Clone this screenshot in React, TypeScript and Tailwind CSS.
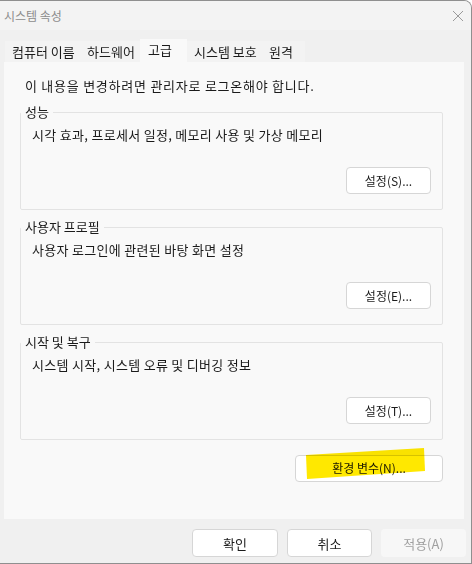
import React from "react";

const font = { fontFamily: '"Noto Sans CJK KR", "Liberation Sans", sans-serif' };

function Btn({ label, className = "" }: { label: string; className?: string }) {
  return (
    <button
      className={`h-[27px] bg-white border border-[#d6d6d6] rounded-[4px] text-[12px] text-[#1b1b1b] leading-none ${className}`}
    >
      {label}
    </button>
  );
}

function Group({ title, desc, button }: { title: string; desc: string; button: string }) {
  return (
    <fieldset className="border border-[#e3e3e3] rounded-[2px] h-[107px] flex flex-col">
      <legend className="px-1 text-[13px] leading-[18px] text-[#1b1b1b]">{title}</legend>
      <div className="pl-[11px] pt-[5px] text-[13px] leading-[18px] tracking-[0.3px] text-[#1b1b1b]">{desc}</div>
      <div className="flex justify-end pr-[11px] mt-[23px]">
        <Btn label={button} className="w-[85px]" />
      </div>
    </fieldset>
  );
}

const tabs = [
  { label: "컴퓨터 이름", w: "w-[75px]" },
  { label: "하드웨어", w: "w-[60px]" },
  { label: "고급", w: "w-[47px]", active: true },
  { label: "시스템 보호", w: "w-[75px]" },
  { label: "원격", w: "w-[43px]" },
];

export default function App() {
  return (
    <div
      style={font}
      className="w-[472px] h-[564px] bg-[#f0f0f0] border-t border-r border-b border-[#8f8f8f] rounded-tr-[8px] flex flex-col overflow-hidden"
    >
      {/* title bar */}
      <div className="h-[29px] bg-[#f3f3f3] flex items-center justify-between pl-[4px] pr-[7px]">
        <span className="text-[12px] text-[#8c8c8c]">시스템 속성</span>
        <svg width="12" height="12" viewBox="0 0 12 12" className="mt-[1px]">
          <path d="M1 1L11 11M11 1L1 11" stroke="#9a9a9a" strokeWidth="1" />
        </svg>
      </div>

      {/* tabs */}
      <div className="flex items-end h-[32px] pl-[5px]">
        {tabs.map((t) =>
          t.active ? (
            <div key={t.label} className={`${t.w} h-[23px] pl-[8px] bg-[#f9f9f9] text-[13px] text-[#1b1b1b] flex items-start pt-[1px]`}>
              {t.label}
            </div>
          ) : (
            <div key={t.label} className={`${t.w} h-[21px] pl-[7px] bg-[#f3f3f3] text-[13px] text-[#1b1b1b] flex items-center whitespace-nowrap`}>
              {t.label}
            </div>
          )
        )}
      </div>

      {/* pane */}
      <div className="ml-[4px] w-[460px] h-[457px] bg-[#f9f9f9] pl-[16px] pr-[21px] pt-[15px] flex flex-col">
        <div className="pl-[5px] text-[13px] leading-[18px] tracking-[0.75px] text-[#1b1b1b]">
          이 내용을 변경하려면 관리자로 로그온해야 합니다.
        </div>
        <div className="mt-[8px] flex flex-col gap-[8px]">
          <Group title="성능" desc="시각 효과, 프로세서 일정, 메모리 사용 및 가상 메모리" button="설정(S)..." />
          <Group title="사용자 프로필" desc="사용자 로그인에 관련된 바탕 화면 설정" button="설정(E)..." />
          <Group title="시작 및 복구" desc="시스템 시작, 시스템 오류 및 디버깅 정보" button="설정(T)..." />
        </div>
        <div className="flex justify-end mt-[14px]">
          <div className="relative">
            <Btn label="환경 변수(N)..." className="w-[148px]" />
            <svg
              className="absolute left-[10px] top-[-7px] mix-blend-multiply pointer-events-none"
              width="122"
              height="34"
              viewBox="0 0 122 34"
            >
              <path d="M1 8 L119 1 L120 24 L2 32 Z" fill="#ffe800" />
            </svg>
          </div>
        </div>
      </div>

      {/* footer */}
      <div className="flex justify-end gap-[9px] pr-[5px] mt-[10px]">
        <Btn label="확인" className="w-[86px] h-[28px] text-[13px]" />
        <Btn label="취소" className="w-[85px] h-[28px] text-[13px]" />
        <button className="w-[85px] h-[28px] bg-[#f7f7f7] rounded-[4px] text-[13px] text-[#a0a0a0] leading-none">
          적용(A)
        </button>
      </div>
    </div>
  );
}
